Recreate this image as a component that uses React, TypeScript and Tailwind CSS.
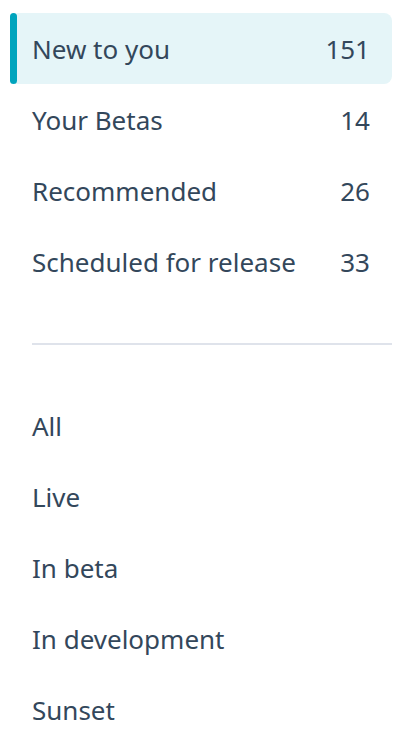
import React from 'react';

const top = [
    { label: 'New to you', count: 151, active: true },
    { label: 'Your Betas', count: 14 },
    { label: 'Recommended', count: 26 },
    { label: 'Scheduled for release', count: 33 },
];

const stages = ['All', 'Live', 'In beta', 'In development', 'Sunset'];

const App: React.FC = () => {
    return (
        <div className="w-[400px] h-[734px] bg-white overflow-hidden text-[#33475b] font-['Noto_Sans',sans-serif] text-[26px] leading-[32px]">
            <div className="pt-[13px] pl-[10px] pr-[8px]">
                {top.map((item) => (
                    <div
                        key={item.label}
                        className={`flex items-center h-[71px] rounded-lg ${item.active ? 'bg-[#e5f5f8]' : ''}`}
                    >
                        <div className={`w-[7px] h-full rounded-full ${item.active ? 'bg-[#00a4bd]' : ''}`} />
                        <span className="pl-[15px] flex-1 whitespace-nowrap">{item.label}</span>
                        <span className="pr-[22px]">{item.count}</span>
                    </div>
                ))}
            </div>
            <div className="ml-[32px] mr-[8px] mt-[46px] h-[2px] bg-[#dfe3eb]" />
            <div className="pt-[45px] pl-[32px]">
                {stages.map((s) => (
                    <div key={s} className="flex items-center h-[71px]">
                        {s}
                    </div>
                ))}
            </div>
        </div>
    );
};

export default App;
